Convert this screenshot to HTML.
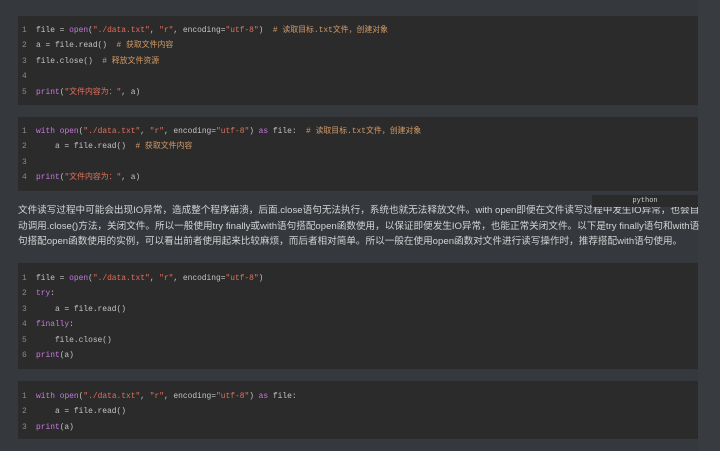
<!DOCTYPE html>
<html><head><meta charset="utf-8"><style>
body{margin:0;width:720px;height:451px;background:#35383d;overflow:hidden;position:relative;font-family:"Liberation Sans","Noto Sans CJK SC",sans-serif}
.blk{position:absolute;left:18px;width:680px;background:#2b2b2c}
.ln{position:absolute;left:0;height:15.5px;font:7.9px/15.5px "Liberation Mono","Noto Sans CJK SC",monospace;color:#c4c4c4;white-space:pre;margin-top:1.5px}
.n{position:absolute;left:4px;color:#8a8a8a}
.c{position:absolute;left:18px}
.k{color:#c678dd}.s{color:#e0705c}.m{color:#d19a66}
.p{position:absolute;left:18px;font-size:9.6px;line-height:15.5px;color:#d4d4d4;white-space:nowrap;width:682px;overflow:hidden}
.tip{position:absolute;left:592px;top:195px;width:106px;height:12px;background:#2b2b2c;color:#ccc;font:7px/12px "Liberation Mono",monospace;text-align:center}
.rs{position:absolute;left:698px;top:0;width:22px;height:451px;background:#383b40}
</style></head><body>
<div class="rs"></div>
<div class="blk" style="top:16px;height:89px">
<div class="ln" style="top:5px"><span class="n">1</span><span class="c">file = <span class="k">open</span>(<span class="s">"./data.txt"</span>, <span class="s">"r"</span>, encoding=<span class="s">"utf-8"</span>)  <span class="m"># 读取目标.txt文件，创建对象</span></span></div>
<div class="ln" style="top:20.5px"><span class="n">2</span><span class="c">a = file.read()  <span class="m"># 获取文件内容</span></span></div>
<div class="ln" style="top:36px"><span class="n">3</span><span class="c">file.close()  <span class="m"># 释放文件资源</span></span></div>
<div class="ln" style="top:51.5px"><span class="n">4</span></div>
<div class="ln" style="top:67px"><span class="n">5</span><span class="c"><span class="k">print</span>(<span class="s">"文件内容为："</span>, a)</span></div>
</div>
<div class="blk" style="top:117px;height:74px">
<div class="ln" style="top:5px"><span class="n">1</span><span class="c"><span class="k">with</span> <span class="k">open</span>(<span class="s">"./data.txt"</span>, <span class="s">"r"</span>, encoding=<span class="s">"utf-8"</span>) <span class="k">as</span> file:  <span class="m"># 读取目标.txt文件，创建对象</span></span></div>
<div class="ln" style="top:20.5px"><span class="n">2</span><span class="c">    a = file.read()  <span class="m"># 获取文件内容</span></span></div>
<div class="ln" style="top:36px"><span class="n">3</span></div>
<div class="ln" style="top:51.5px"><span class="n">4</span><span class="c"><span class="k">print</span>(<span class="s">"文件内容为："</span>, a)</span></div>
</div>
<div class="p" style="top:203px">文件读写过程中可能会出现IO异常，造成整个程序崩溃，后面.close语句无法执行，系统也就无法释放文件。with open即便在文件读写过程中发生IO异常，也会自</div>
<div class="p" style="top:218.5px">动调用.close()方法，关闭文件。所以一般使用try finally或with语句搭配open函数使用，以保证即便发生IO异常，也能正常关闭文件。以下是try finally语句和with语</div>
<div class="p" style="top:234px">句搭配open函数使用的实例，可以看出前者使用起来比较麻烦，而后者相对简单。所以一般在使用open函数对文件进行读写操作时，推荐搭配with语句使用。</div>
<div class="tip">python</div>
<div class="blk" style="top:263px;height:106px">
<div class="ln" style="top:6px"><span class="n">1</span><span class="c">file = <span class="k">open</span>(<span class="s">"./data.txt"</span>, <span class="s">"r"</span>, encoding=<span class="s">"utf-8"</span>)</span></div>
<div class="ln" style="top:21.5px"><span class="n">2</span><span class="c"><span class="k">try</span>:</span></div>
<div class="ln" style="top:37px"><span class="n">3</span><span class="c">    a = file.read()</span></div>
<div class="ln" style="top:52.5px"><span class="n">4</span><span class="c"><span class="k">finally</span>:</span></div>
<div class="ln" style="top:68px"><span class="n">5</span><span class="c">    file.close()</span></div>
<div class="ln" style="top:83.5px"><span class="n">6</span><span class="c"><span class="k">print</span>(a)</span></div>
</div>
<div class="blk" style="top:381px;height:58px">
<div class="ln" style="top:6px"><span class="n">1</span><span class="c"><span class="k">with</span> <span class="k">open</span>(<span class="s">"./data.txt"</span>, <span class="s">"r"</span>, encoding=<span class="s">"utf-8"</span>) <span class="k">as</span> file:</span></div>
<div class="ln" style="top:21.5px"><span class="n">2</span><span class="c">    a = file.read()</span></div>
<div class="ln" style="top:37px"><span class="n">3</span><span class="c"><span class="k">print</span>(a)</span></div>
</div>
</body></html>
